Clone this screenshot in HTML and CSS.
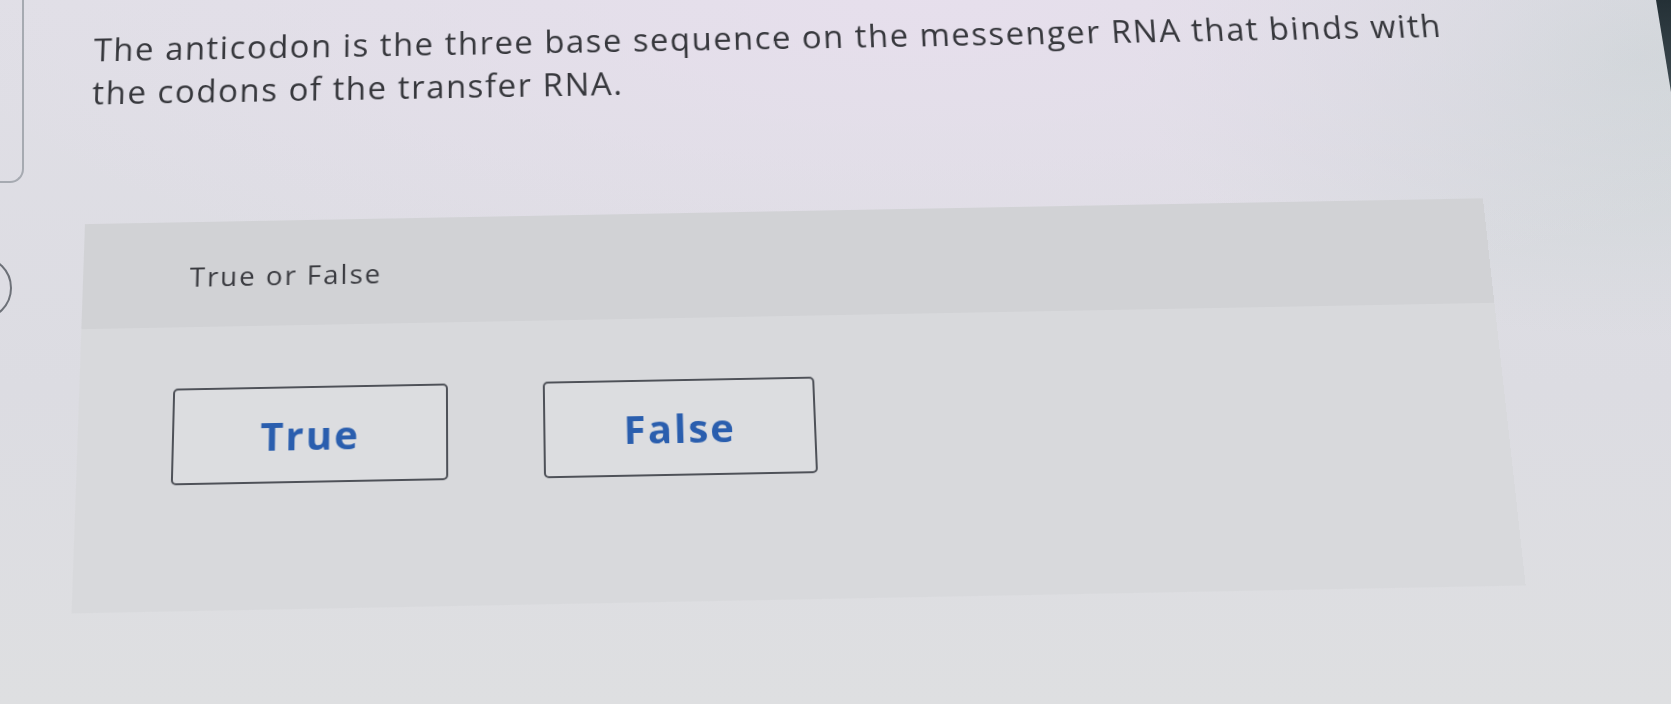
FILE: index.html
```html
<!DOCTYPE html>
<html lang="en">
<head>
<meta charset="utf-8">
<title>True or False</title>
<link rel="stylesheet" href="styles.css">
</head>
<body>
<div class="screen">
  <aside class="rail">
    <div class="rail-card"></div>
    <div class="rail-radio"></div>
  </aside>
  <main class="sheet">
    <p class="prompt">The anticodon is the three base sequence on the messenger RNA that binds with the codons of the transfer RNA.</p>
    <section class="answer-panel">
      <header class="answer-head"><span class="answer-type">True or False</span></header>
      <div class="answer-body">
        <button class="choice choice-true" type="button">True</button>
        <button class="choice choice-false" type="button">False</button>
      </div>
    </section>
  </main>
</div>
</body>
</html>
```
FILE: styles.css
```css
* {
  box-sizing: border-box;
}

html,
body {
  margin: 0;
  height: 100%;
}

body {
  overflow: hidden;
  font-family: "Open Sans", "Noto Sans", sans-serif;
  background:
    radial-gradient(ellipse 60% 45% at 55% 0%, rgba(231, 223, 237, 0.9), rgba(231, 223, 237, 0) 100%),
    radial-gradient(ellipse 30% 40% at 98% 8%, rgba(200, 210, 210, 0.8), rgba(200, 210, 210, 0) 100%),
    linear-gradient(180deg, #e0dfe6 0%, #dcdce2 55%, #dedfe1 100%);
}

.screen {
  position: relative;
  display: flex;
  width: 1671px;
  height: 704px;
}

/* bezel edge in the top right corner */
.screen::after {
  content: "";
  position: absolute;
  top: 0;
  right: 0;
  width: 15px;
  height: 92px;
  background: linear-gradient(180deg, #243036, #3d4a50);
  clip-path: polygon(0 0, 100% 0, 100% 100%);
}

/* left rail: edge of the previous card and a radio control */
.rail {
  flex: 0 0 25px;
  display: flex;
  flex-direction: column;
  overflow: hidden;
}

.rail-card {
  flex: none;
  width: 54px;
  height: 183px;
  margin-left: -30px;
  border: 2px solid #a6aab1;
  border-top: 0;
  border-radius: 0 0 14px 0;
}

.rail-radio {
  flex: none;
  width: 64px;
  height: 64px;
  margin-left: -52px;
  margin-top: 73px;
  border: 2px solid #6d7178;
  border-radius: 50%;
}

/* the sheet is seen slightly tilted on the display */
.sheet {
  flex: 1;
  padding: 0 0 0 54px;
  transform: perspective(2000px) rotateX(11.5deg) rotate(-1.1deg);
  transform-origin: 585px 400px;
}

.prompt {
  margin: -4px 0 0 3px;
  width: 1430px;
  font-size: 34px;
  font-weight: 500;
  line-height: 47px;
  letter-spacing: 1.6px;
  color: #36373c;
}

.answer-panel {
  margin-top: 117px;
  width: 1426px;
  background: #d8d9dc;
}

.answer-head {
  height: 110px;
  padding: 41px 0 0 108px;
  background: #d1d2d5;
}

.answer-type {
  display: block;
  font-size: 28px;
  font-weight: 500;
  line-height: 32px;
  letter-spacing: 2px;
  color: #3a3b40;
}

.answer-body {
  display: flex;
  align-items: flex-start;
  gap: 95px;
  height: 286px;
  padding: 63px 0 0 94px;
}

.choice {
  width: 275px;
  height: 98px;
  padding: 0;
  border: 2px solid #4e5158;
  border-radius: 5px;
  background: #dcdde0;
  color: #2a5eae;
  font-family: inherit;
  font-size: 40px;
  font-weight: 700;
  letter-spacing: 2px;
  cursor: pointer;
}

.choice-false {
  width: 272px;
}
```
